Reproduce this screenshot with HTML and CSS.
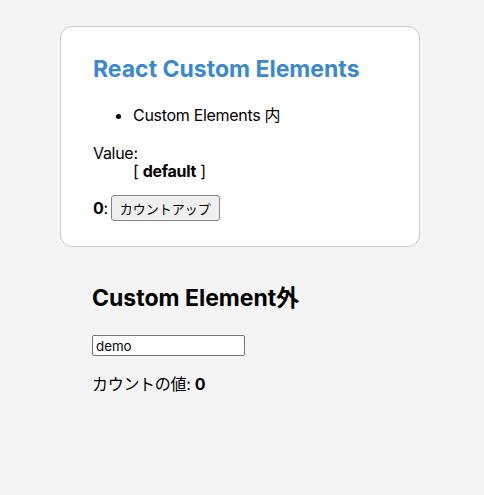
FILE: index.html
```html
<!DOCTYPE html>
<html lang="ja">
<head>
<meta charset="utf-8">
<title>React Custom Elements</title>
<link rel="stylesheet" href="styles.css">
</head>
<body>
<main class="page">
  <section class="card">
    <h1 class="card-title">React Custom Elements</h1>
    <ul class="list">
      <li>Custom Elements 内</li>
    </ul>
    <dl class="value">
      <dt>Value:</dt>
      <dd>[ <b>default</b> ]</dd>
    </dl>
    <div class="counter"><span><b>0</b>:</span><button class="btn" type="button">カウントアップ</button></div>
  </section>
  <section class="outside">
    <h2 class="outside-title">Custom Element外</h2>
    <input class="field" type="text" value="demo">
    <p class="count">カウントの値: <b>0</b></p>
  </section>
</main>
</body>
</html>
```

FILE: styles.css
```css
html, body {
  margin: 0;
  padding: 0;
  background: #f4f4f4;
}
body {
  font-family: Inter, "Noto Sans CJK JP", sans-serif;
  font-size: 16px;
  line-height: 18px;
  letter-spacing: -0.3px;
  color: #000;
}
.page {
  width: 360px;
  margin: 0 0 0 60px;
  padding-top: 26px;
}
.card {
  background: #fff;
  border: 1px solid #cccccc;
  border-radius: 12px;
  padding: 28px 32px 25px;
}
.card-title {
  margin: 0 0 23px;
  font-size: 23px;
  line-height: 28px;
  letter-spacing: 0;
  font-weight: 700;
  color: #3a88d0;
}
.list {
  margin: 0 0 20px;
  padding-left: 40px;
}
.value {
  margin: 0 0 15px;
}
.value dd {
  margin-left: 40px;
}
.counter {
  display: flex;
  align-items: center;
  gap: 3px;
}
.btn {
  box-sizing: border-box;
  height: 26px;
  font-family: "Noto Sans CJK JP", sans-serif;
  font-size: 13px;
  line-height: 1;
  letter-spacing: 0;
  padding: 0 8px;
  border: 1px solid #858585;
  border-radius: 3px;
  background: #efefef;
  color: #000;
}
.outside {
  padding: 37px 32px 32px;
}
.outside-title {
  margin: 0;
  font-size: 23px;
  line-height: 28px;
  letter-spacing: 0;
  font-weight: 700;
}
.field {
  display: block;
  box-sizing: border-box;
  width: 153px;
  height: 21px;
  margin-top: 23px;
  font-family: Inter, sans-serif;
  font-size: 13.33px;
  letter-spacing: 0;
  padding: 1px 3px;
  border: 1px solid #767676;
  border-radius: 2px;
  background: #fff;
  color: #000;
}
.count {
  margin: 19px 0 0;
}
```
